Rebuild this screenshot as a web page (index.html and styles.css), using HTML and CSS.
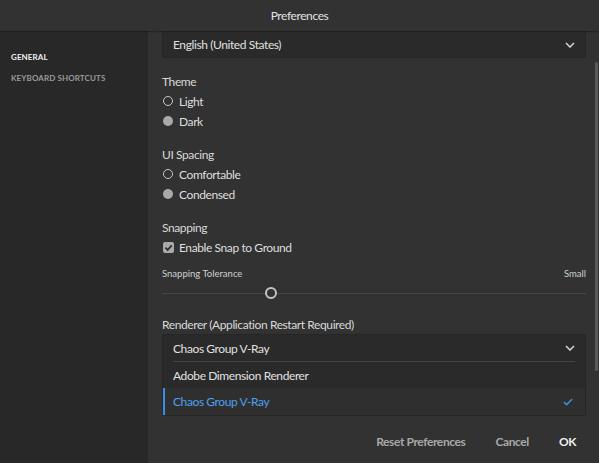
FILE: index.html
```html
<!DOCTYPE html>
<html lang="en">
<head>
    <meta charset="UTF-8">
    <title>Preferences</title>
    <link rel="stylesheet" href="styles.css">
</head>
<body>
    <div class="window">
        <header class="titlebar">Preferences</header>

        <div class="main">
            <nav class="sidebar">
                <a class="nav-item active">General</a>
                <a class="nav-item">Keyboard Shortcuts</a>
            </nav>

            <section class="content">
                <div class="scroll-area">
                    <div class="settings">
                        <div class="select select-top">
                            <span>English (United States)</span>
                            <svg class="chevron" viewBox="0 0 10 6"><path d="M1 1l4 4 4-4"/></svg>
                        </div>

                        <div class="group">
                            <div class="group-label">Theme</div>
                            <label class="option"><span class="radio"></span>Light</label>
                            <label class="option"><span class="radio checked"></span>Dark</label>
                        </div>

                        <div class="group">
                            <div class="group-label">UI Spacing</div>
                            <label class="option"><span class="radio"></span>Comfortable</label>
                            <label class="option"><span class="radio checked"></span>Condensed</label>
                        </div>

                        <div class="group">
                            <div class="group-label">Snapping</div>
                            <label class="option">
                                <span class="checkbox">
                                    <svg viewBox="0 0 10 10"><path d="M2.2 5.2l2 2 3.8-4.2"/></svg>
                                </span>
                                Enable Snap to Ground
                            </label>
                        </div>

                        <div class="slider-row">
                            <div class="slider-labels">
                                <span>Snapping Tolerance</span>
                                <span>Small</span>
                            </div>
                            <div class="slider">
                                <div class="track"></div>
                                <div class="thumb-knob"></div>
                            </div>
                        </div>

                        <div class="group renderer">
                            <div class="group-label">Renderer (Application Restart Required)</div>
                            <div class="dropdown">
                                <div class="select open">
                                    <span>Chaos Group V-Ray</span>
                                    <svg class="chevron" viewBox="0 0 10 6"><path d="M1 1l4 4 4-4"/></svg>
                                </div>
                                <ul class="menu">
                                    <li class="menu-item">Adobe Dimension Renderer</li>
                                    <li class="menu-item selected">
                                        Chaos Group V-Ray
                                        <svg class="check" viewBox="0 0 10 8"><path d="M1 4.2l2.6 2.4L9 1.2"/></svg>
                                    </li>
                                </ul>
                            </div>
                            <div class="peek"></div>
                        </div>
                    </div>
                    <div class="scrollbar"><div class="scroll-thumb"></div></div>
                </div>

                <footer class="footer">
                    <button class="btn">Reset Preferences</button>
                    <button class="btn">Cancel</button>
                    <button class="btn btn-ok">OK</button>
                </footer>
            </section>
        </div>
    </div>
</body>
</html>
```

FILE: styles.css
```css
body {
    margin: 0;
    background: #323232;
    font-family: 'Lato', 'Open Sans', sans-serif;
    font-size: 12px;
    letter-spacing: -0.4px;
    color: #dcdcdc;
}

.window {
    width: 599px;
    height: 463px;
    display: flex;
    flex-direction: column;
    overflow: hidden;
}

.titlebar {
    height: 31px;
    line-height: 31px;
    text-align: center;
    color: #e2e2e2;
    background: #323232;
    box-shadow: 0 1px 1px rgba(0,0,0,0.25);
    position: relative;
    z-index: 2;
    flex-shrink: 0;
}

.main {
    flex: 1;
    display: flex;
    min-height: 0;
}

.sidebar {
    width: 148px;
    background: #282828;
    padding-top: 21px;
    display: flex;
    flex-direction: column;
    gap: 10px;
    flex-shrink: 0;
}

.nav-item {
    padding-left: 11px;
    font-size: 8px;
    font-weight: 700;
    text-transform: uppercase;
    letter-spacing: 0.1px;
    color: #9a9a9a;
    line-height: 11px;
}

.nav-item.active {
    color: #f0f0f0;
}

.content {
    flex: 1;
    display: flex;
    flex-direction: column;
    background: #323232;
}

.scroll-area {
    height: 389px;
    display: flex;
}

.settings {
    flex: 1;
    padding: 0 4px 0 14px;
}

.scrollbar {
    width: 9px;
    padding-top: 31px;
}

.scroll-thumb {
    margin-left: 5px;
    width: 3px;
    height: 309px;
    background: #595959;
    border-radius: 2px;
}

.select {
    height: 26px;
    display: flex;
    align-items: center;
    justify-content: space-between;
    padding: 0 10px 0 10px;
    background: #2a2a2a;
    border: 1px solid #262626;
    border-radius: 3px;
    color: #e0e0e0;
    box-sizing: border-box;
}

.select-top {
    height: 27px;
    padding-top: 1px;
    border-top: none;
    border-radius: 0 0 3px 3px;
}

.chevron {
    width: 10px;
    height: 6px;
    fill: none;
    stroke: #d0d0d0;
    stroke-width: 1.6;
}

.group {
    margin-top: 16px;
}

.group-label {
    line-height: 16px;
    color: #d8d8d8;
    margin-bottom: 1px;
}

.option {
    display: flex;
    align-items: center;
    gap: 6px;
    height: 20px;
    color: #dedede;
    padding-left: 1px;
}

.radio {
    width: 10px;
    height: 10px;
    box-sizing: border-box;
    border: 1.5px solid #c8c8c8;
    border-radius: 50%;
}

.radio.checked {
    border: none;
    background: #a9a9a9;
}

.checkbox {
    width: 11px;
    height: 11px;
    border-radius: 2px;
    background: #aaaaaa;
    display: flex;
    margin-right: -1px;
}

.checkbox svg {
    width: 11px;
    height: 11px;
    fill: none;
    stroke: #2e2e2e;
    stroke-width: 1.6;
}

.slider-row {
    margin-top: 11px;
}

.slider-labels {
    display: flex;
    justify-content: space-between;
    font-size: 9.5px;
    letter-spacing: 0;
    color: #d0d0d0;
    line-height: 12px;
}

.slider {
    position: relative;
    height: 16px;
    margin-top: 6px;
}

.track {
    position: absolute;
    left: 0;
    right: 0;
    top: 7px;
    height: 1px;
    background: #464646;
}

.thumb-knob {
    position: absolute;
    left: 103px;
    top: 1px;
    width: 12px;
    height: 12px;
    box-sizing: border-box;
    border: 2px solid #c4c4c4;
    border-radius: 50%;
    background: #323232;
}

.renderer {
    margin-top: 15px;
}

.renderer .group-label {
    margin-bottom: 1px;
}

.dropdown {
    position: relative;
}

.select.open {
    height: 27px;
    border-radius: 3px 3px 0 0;
    border-bottom: none;
}

.menu {
    position: absolute;
    left: 0;
    right: 0;
    top: 27px;
    margin: 0;
    padding: 0;
    list-style: none;
    background: #2a2a2a;
    border: 1px solid #262626;
    border-top: none;
    border-radius: 0 0 3px 3px;
    z-index: 3;
}

.menu::before {
    content: '';
    display: block;
    height: 1px;
    margin: 0 10px 0 10px;
    background: #444;
}

.menu-item {
    height: 26px;
    display: flex;
    align-items: center;
    justify-content: space-between;
    padding: 0 12px 0 8px;
    color: #e0e0e0;
    border-left: 2px solid transparent;
}

.menu-item.selected {
    background: #2f2f2f;
    border-left-color: #3a8ee6;
    color: #4ca0f0;
    height: 27px;
}

.check {
    width: 10px;
    height: 8px;
    fill: none;
    stroke: #3a8ee6;
    stroke-width: 1.6;
}

.peek {
    margin-top: 18px;
    width: 2px;
    height: 2px;
    background: #8a8a8a;
}

.footer {
    flex: 1;
    display: flex;
    justify-content: flex-end;
    align-items: center;
    padding-right: 23px;
    padding-bottom: 1px;
}

.btn {
    background: none;
    border: none;
    font-family: inherit;
    font-size: 12px;
    font-weight: 700;
    letter-spacing: -0.4px;
    color: #a8a8a8;
    padding: 0;
    margin-left: 30px;
    cursor: pointer;
}

.btn-ok {
    color: #eeeeee;
}
```
